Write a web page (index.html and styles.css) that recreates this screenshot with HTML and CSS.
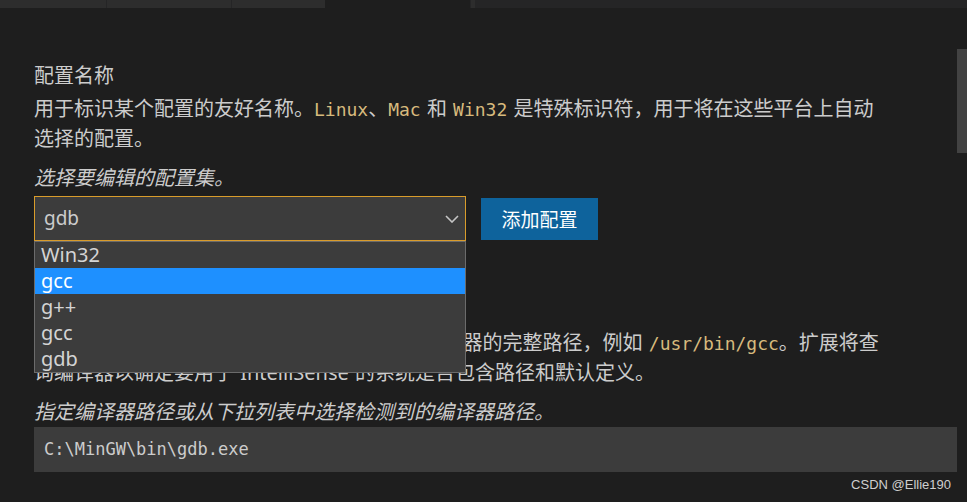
FILE: index.html
```html
<!DOCTYPE html>
<html lang="zh-CN">
<head>
<meta charset="utf-8">
<title>C/C++ 配置</title>
<link rel="stylesheet" href="styles.css">
</head>
<body>
<div class="tabs">
  <div class="tab t1"></div>
  <div class="tab t2"></div>
  <div class="tab t3"></div>
  <div class="tab active"></div>
  <div class="tab t5"></div>
  <div class="tab rest"></div>
</div>
<div class="main">
  <div class="content">
    <section class="setting">
      <div class="title">配置名称</div>
      <div class="desc">用于标识某个配置的友好名称。<code>Linux</code>、<code>Mac</code> 和 <code>Win32</code> 是特殊标识符，用于将在这些平台上自动选择的配置。</div>
      <div class="hint">选择要编辑的配置集。</div>
      <div class="row">
        <div class="select-wrap">
          <div class="select">
            <span>gdb</span>
            <svg class="chevron" width="14" height="8" viewBox="0 0 14 8"><path d="M1 1l6 6 6-6" fill="none" stroke="#c5c5c5" stroke-width="1.6"/></svg>
          </div>
          <ul class="options">
            <li>Win32</li>
            <li class="selected">gcc</li>
            <li>g++</li>
            <li>gcc</li>
            <li>gdb</li>
          </ul>
        </div>
        <button class="btn">添加配置</button>
      </div>
    </section>
    <section class="setting second">
      <div class="title">编译器路径</div>
      <div class="desc">用于生成项目以启用更准确的IntelliSense的编译器的完整路径，例如 <code>/usr/bin/gcc</code>。扩展将查询编译器以确定要用于 IntelliSense 的系统是否包含路径和默认定义。</div>
      <div class="hint">指定编译器路径或从下拉列表中选择检测到的编译器路径。</div>
      <div class="input">C:\MinGW\bin\gdb.exe</div>
    </section>
  </div>
  <div class="scrollbar"><div class="thumb"></div></div>
</div>
<div class="watermark">CSDN @Ellie190</div>
</body>
</html>
```

FILE: styles.css
```css
html, body {
  margin: 0;
  padding: 0;
}
body {
  width: 967px;
  height: 502px;
  overflow: hidden;
  background: #1e1e1e;
  color: #cccccc;
  font-family: "Noto Sans", "Noto Sans CJK SC", sans-serif;
  position: relative;
}
.tabs {
  display: flex;
  height: 8px;
}
.tab {
  height: 8px;
  background: #2d2d2d;
}
.t1 { width: 106px; border-right: 1px solid #252526; }
.t2 { width: 124px; border-right: 1px solid #252526; }
.t3 { width: 93px; }
.active { width: 145px; background: #1e1e1e; }
.t5 { width: 4px; background: #2d2d2d; border-left: 1px solid #252526; }
.rest { flex: 1; background: #252526; }

.main {
  display: flex;
  height: 494px;
}
.content {
  flex: 1;
  padding: 53px 0 0 34px;
}
.scrollbar {
  width: 10px;
}
.thumb {
  margin-top: 41px;
  height: 104px;
  background: #424242;
}

.setting {
  font-size: 20px;
  line-height: 29px;
}
.second {
  margin-top: 54px;
}
.title {
  color: #cccccc;
}
.desc {
  margin-top: 4px;
  max-width: 856px;
  word-spacing: 1px;
}
code {
  font-family: "DejaVu Sans Mono", monospace;
  font-size: 18px;
  color: #d7ba7d;
  word-spacing: 0;
}
.hint {
  margin-top: 10px;
  font-style: italic;
}
.row {
  display: flex;
  align-items: center;
  margin-top: 4px;
}
.select-wrap {
  position: relative;
  width: 432px;
}
.select {
  box-sizing: border-box;
  height: 45px;
  border: 1px solid #d99c2b;
  background: #3c3c3c;
  display: flex;
  align-items: center;
  justify-content: space-between;
  padding: 0 6px 0 9px;
  font-size: 19px;
}
.chevron {
  display: block;
}
.options {
  position: absolute;
  top: 45px;
  left: 0;
  z-index: 2;
  box-sizing: border-box;
  width: 432px;
  margin: 0;
  padding: 0;
  list-style: none;
  background: #3c3c3c;
  border: 1px solid #6b6b6b;
}
.options li {
  height: 26px;
  line-height: 26px;
  padding-left: 6px;
  font-size: 20px;
  color: #d4d4d4;
}
.options li.selected {
  background: #1e90ff;
  color: #ffffff;
}
.btn {
  margin-left: 15px;
  width: 117px;
  height: 42px;
  border: none;
  padding: 0;
  background: #0e639c;
  color: #ffffff;
  font-family: "Noto Sans", "Noto Sans CJK SC", sans-serif;
  font-size: 19px;
}
.input {
  margin-top: 1px;
  height: 45px;
  box-sizing: border-box;
  background: #3c3c3c;
  padding-left: 10px;
  display: flex;
  align-items: center;
  font-family: "DejaVu Sans Mono", monospace;
  font-size: 17px;
  color: #cccccc;
}
.watermark {
  position: absolute;
  right: 16px;
  top: 477px;
  font-family: "Liberation Sans", Arial, sans-serif;
  font-size: 13px;
  color: #cfcfcf;
}
```
